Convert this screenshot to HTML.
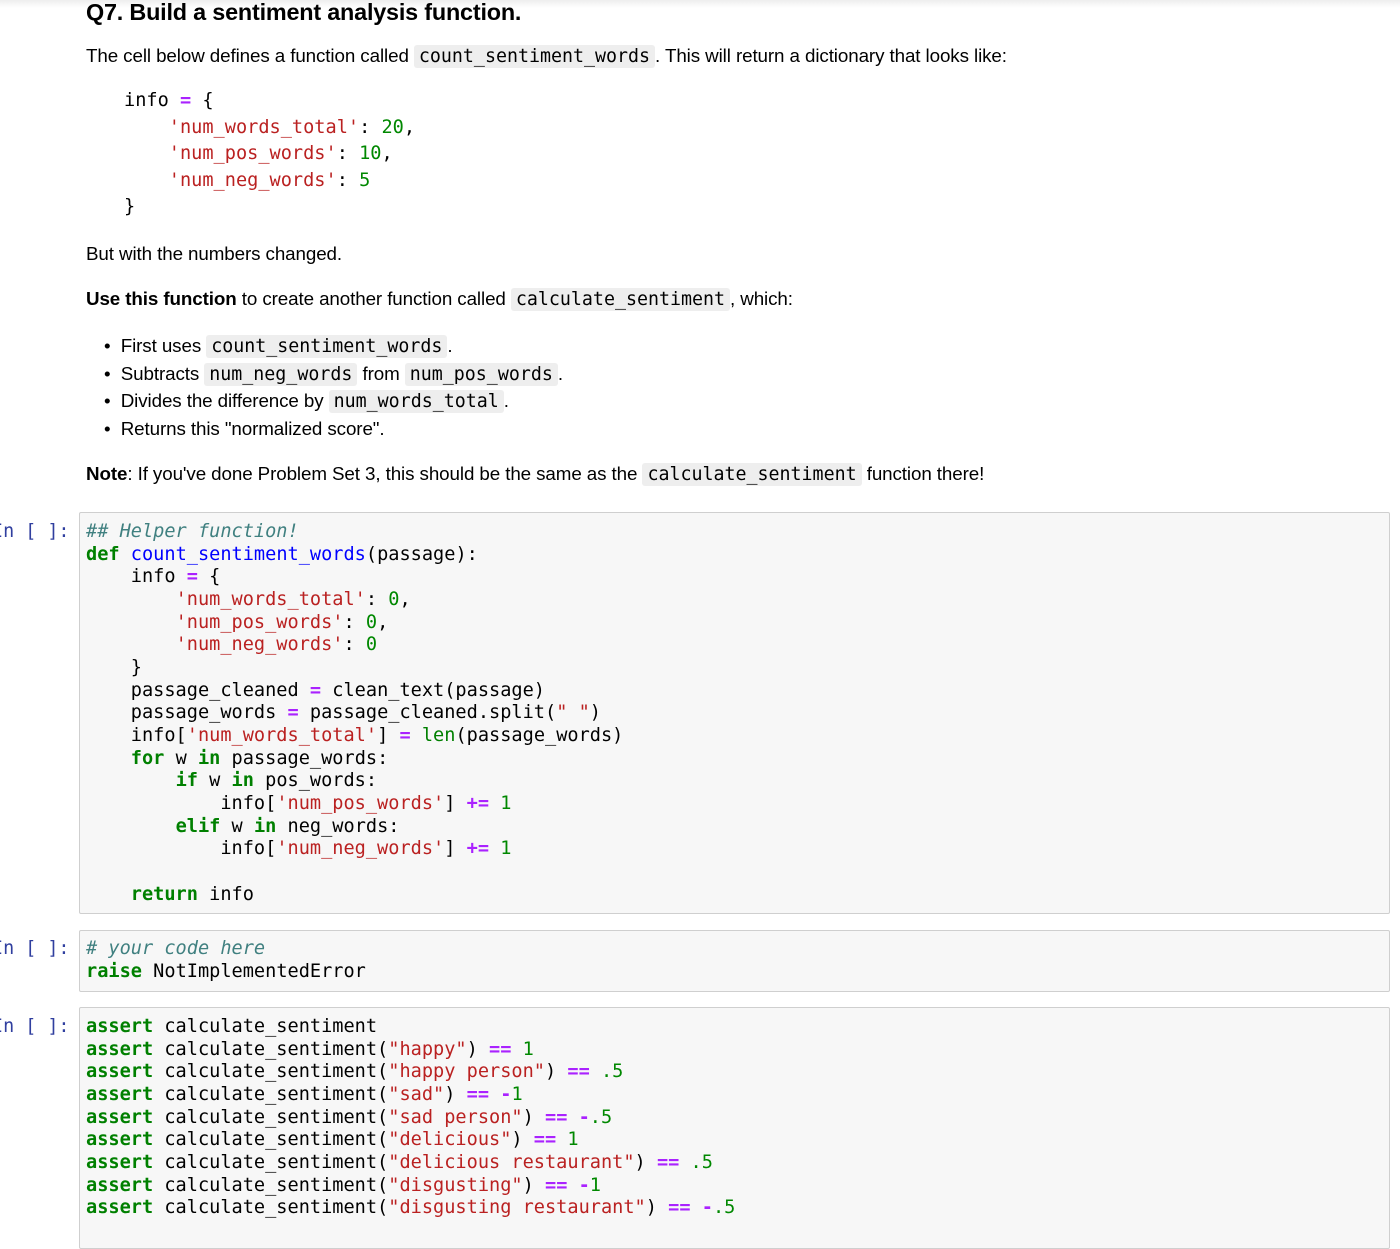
<!DOCTYPE html>
<html><head><meta charset="utf-8"><style>
body{margin:0;width:1400px;height:1228px;overflow:hidden;background:#fff;font-family:"Liberation Sans",sans-serif;color:#000;position:relative}
.t{position:absolute;left:86px;font-size:18.8px;white-space:pre;line-height:24px;letter-spacing:-0.1px}
code,.m{font-family:"DejaVu Sans Mono","Liberation Mono",monospace}
code{background:#eee;padding:1px 5px;border-radius:3px;font-size:18.3px;letter-spacing:0}
.m{position:absolute;white-space:pre;font-size:18.6px}
.k{color:#008000;font-weight:bold}.s{color:#ba2121}.n{color:#080}.o{color:#aa22ff;font-weight:bold}.f{color:#00f}.c{color:#408080;font-style:italic}.b{color:#008000}
.cell{position:absolute;left:79px;width:1309px;background:#f7f7f7;border:1px solid #cfcfcf;border-radius:2px}
.cell .m{left:6px;line-height:22.65px}
.p{position:absolute;left:-8px;font-family:"DejaVu Sans Mono",monospace;font-size:18.4px;color:#303f9f;white-space:pre}
</style></head><body>
<div style="position:absolute;left:0;top:0;width:1400px;height:8px;background:linear-gradient(#eee,#fff)"></div>
<div class="t" style="top:0;font-size:23.4px;font-weight:bold;letter-spacing:-0.2px">Q7. Build a sentiment analysis function.</div>
<div class="t" style="top:44px">The cell below defines a function called <code>count_sentiment_words</code>. This will return a dictionary that looks like:</div>
<div class="m" style="left:124px;top:88px;line-height:26.5px">info <span class="o">=</span> {
    <span class="s">'num_words_total'</span>: <span class="n">20</span>,
    <span class="s">'num_pos_words'</span>: <span class="n">10</span>,
    <span class="s">'num_neg_words'</span>: <span class="n">5</span>
}</div>
<div class="t" style="top:242px">But with the numbers changed.</div>
<div class="t" style="top:287px"><b>Use this function</b> to create another function called <code>calculate_sentiment</code>, which:</div>
<div class="t" style="top:334px;left:104px">•  First uses <code>count_sentiment_words</code>.</div>
<div class="t" style="top:362px;left:104px">•  Subtracts <code>num_neg_words</code> from <code>num_pos_words</code>.</div>
<div class="t" style="top:389px;left:104px">•  Divides the difference by <code>num_words_total</code>.</div>
<div class="t" style="top:417px;left:104px">•  Returns this "normalized score".</div>
<div class="t" style="top:462px"><b>Note</b>: If you've done Problem Set 3, this should be the same as the <code>calculate_sentiment</code> function there!</div>

<div class="p" style="top:521px">In [ ]:</div>
<div class="cell" style="top:512px;height:400px"><div class="m" style="top:8px"><span class="c">## Helper function!</span>
<span class="k">def</span> <span class="f">count_sentiment_words</span>(passage):
    info <span class="o">=</span> {
        <span class="s">'num_words_total'</span>: <span class="n">0</span>,
        <span class="s">'num_pos_words'</span>: <span class="n">0</span>,
        <span class="s">'num_neg_words'</span>: <span class="n">0</span>
    }
    passage_cleaned <span class="o">=</span> clean_text(passage)
    passage_words <span class="o">=</span> passage_cleaned.split(<span class="s">" "</span>)
    info[<span class="s">'num_words_total'</span>] <span class="o">=</span> <span class="b">len</span>(passage_words)
    <span class="k">for</span> w <span class="k">in</span> passage_words:
        <span class="k">if</span> w <span class="k">in</span> pos_words:
            info[<span class="s">'num_pos_words'</span>] <span class="o">+=</span> <span class="n">1</span>
        <span class="k">elif</span> w <span class="k">in</span> neg_words:
            info[<span class="s">'num_neg_words'</span>] <span class="o">+=</span> <span class="n">1</span>

    <span class="k">return</span> info</div></div>

<div class="p" style="top:938px">In [ ]:</div>
<div class="cell" style="top:930px;height:60px"><div class="m" style="top:7px"><span class="c"># your code here</span>
<span class="k">raise</span> NotImplementedError</div></div>

<div class="p" style="top:1016px">In [ ]:</div>
<div class="cell" style="top:1007px;height:240px"><div class="m" style="top:8px"><span class="k">assert</span> calculate_sentiment
<span class="k">assert</span> calculate_sentiment(<span class="s">"happy"</span>) <span class="o">==</span> <span class="n">1</span>
<span class="k">assert</span> calculate_sentiment(<span class="s">"happy person"</span>) <span class="o">==</span> <span class="n">.5</span>
<span class="k">assert</span> calculate_sentiment(<span class="s">"sad"</span>) <span class="o">==</span> <span class="o">-</span><span class="n">1</span>
<span class="k">assert</span> calculate_sentiment(<span class="s">"sad person"</span>) <span class="o">==</span> <span class="o">-</span><span class="n">.5</span>
<span class="k">assert</span> calculate_sentiment(<span class="s">"delicious"</span>) <span class="o">==</span> <span class="n">1</span>
<span class="k">assert</span> calculate_sentiment(<span class="s">"delicious restaurant"</span>) <span class="o">==</span> <span class="n">.5</span>
<span class="k">assert</span> calculate_sentiment(<span class="s">"disgusting"</span>) <span class="o">==</span> <span class="o">-</span><span class="n">1</span>
<span class="k">assert</span> calculate_sentiment(<span class="s">"disgusting restaurant"</span>) <span class="o">==</span> <span class="o">-</span><span class="n">.5</span></div></div>
</body></html>
